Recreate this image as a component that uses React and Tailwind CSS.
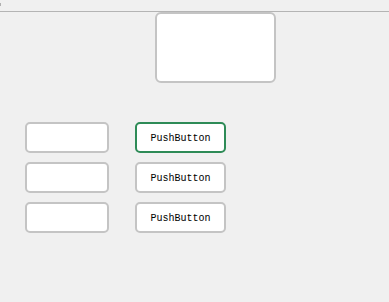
import React from "react";

function Row({ active }) {
    return (
        <div className="flex items-center gap-[26px]">
            <div className="w-[84px] h-[31px] bg-white border-2 border-[#c4c4c4] rounded-[5px]" />
            <button
                className={
                    active
                        ? "w-[91px] h-[31px] pt-[2px] bg-white border-2 border-[#2e8b57] rounded-[5px] text-[10px] text-black"
                        : "w-[91px] h-[31px] pt-[2px] bg-white border-2 border-[#c4c4c4] rounded-[5px] text-[10px] text-black"
                }
                style={{ fontFamily: '"Liberation Mono", "DejaVu Sans Mono", monospace' }}
            >
                PushButton
            </button>
        </div>
    );
}

export default function App() {
    return (
        <div className="w-[389px] h-[302px] bg-[#f0f0f0] overflow-hidden">
            <div className="h-[11px] bg-[#f0f0f0] relative">
                <div className="absolute left-0 top-[3px] w-px h-[3px] bg-[#b0b0b0]" />
            </div>
            <div className="h-px bg-[#b4b4b4]" />
            <div className="ml-[155px] w-[121px] h-[71px] bg-white border-2 border-[#c4c4c4] rounded-[6px]" />
            <div className="mt-[39px] ml-[25px] flex flex-col gap-[9px]">
                <Row active />
                <Row />
                <Row />
            </div>
        </div>
    );
}
